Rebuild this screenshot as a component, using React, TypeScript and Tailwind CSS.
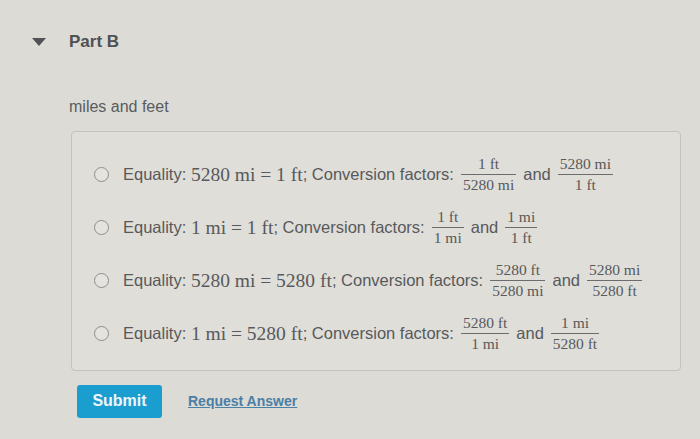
import React from 'react';

const Math = ({ children }: { children: React.ReactNode }) => (
  <span className="font-['Liberation_Serif',serif] text-[19.5px]">{children}</span>
);

const Frac = ({ top, bottom }: { top: string; bottom: string }) => (
  <span className="mx-[7px] inline-flex flex-col items-center align-middle font-['Liberation_Serif',serif] text-[15.5px] leading-[16px]">
    <span className="px-[2px] pb-[2px]">{top}</span>
    <span className="w-full border-t border-[#6b6c6e] px-[2px] pt-[2px] text-center">{bottom}</span>
  </span>
);

type Option = {
  equality: [string, string];
  f1: [string, string];
  f2: [string, string];
};

const options: Option[] = [
  { equality: ['5280 mi', '1 ft'], f1: ['1 ft', '5280 mi'], f2: ['5280 mi', '1 ft'] },
  { equality: ['1 mi', '1 ft'], f1: ['1 ft', '1 mi'], f2: ['1 mi', '1 ft'] },
  { equality: ['5280 mi', '5280 ft'], f1: ['5280 ft', '5280 mi'], f2: ['5280 mi', '5280 ft'] },
  { equality: ['1 mi', '5280 ft'], f1: ['5280 ft', '1 mi'], f2: ['1 mi', '5280 ft'] },
];

export default function App() {
  return (
    <div className="h-[439px] w-[700px] overflow-hidden bg-[#dcdbd5] font-['Liberation_Sans',Arial,sans-serif] text-[#58595c]">
      {/* Part header */}
      <div className="flex items-center pt-[29px]">
        <svg className="ml-[32px] h-[10px] w-[14px]" viewBox="0 0 14 10">
          <path d="M0 1 L14 1 L7 9 Z" fill="#505257" />
        </svg>
        <span className="ml-[23px] text-[17px] font-bold text-[#4f5155]">Part B</span>
      </div>

      <p className="ml-[69px] mt-[40px] text-[16px] text-[#5a5b5e]">miles and feet</p>

      {/* Options box */}
      <div className="ml-[71px] mt-[12px] w-[610px] rounded-[4px] border border-[#c4c3bd] bg-[#dfded8] pb-[18px] pl-[22px] pt-[25px]">
        {options.map((o, i) => (
          <label key={i} className="mb-[17px] flex h-[36px] items-center last:mb-0">
            <span className="h-[15px] w-[15px] shrink-0 rounded-full border-[1.5px] border-[#8d8e91] bg-[#e4e3de]" />
            <span className="ml-[14px] flex items-center text-[16.5px]">
              <span>Equality:&nbsp;</span>
              <Math>
                {o.equality[0]} = {o.equality[1]}
              </Math>
              <span>; Conversion factors:</span>
              <Frac top={o.f1[0]} bottom={o.f1[1]} />
              <span>and</span>
              <Frac top={o.f2[0]} bottom={o.f2[1]} />
            </span>
          </label>
        ))}
      </div>

      {/* Actions */}
      <div className="ml-[77px] mt-[14px] flex items-center">
        <button className="h-[33px] w-[85px] rounded-[3px] bg-[#1a9dcf] text-[16px] font-bold text-[#eef6fa]">
          Submit
        </button>
        <a className="ml-[26px] text-[14px] font-bold text-[#4a7fa6] underline">Request Answer</a>
      </div>
    </div>
  );
}
